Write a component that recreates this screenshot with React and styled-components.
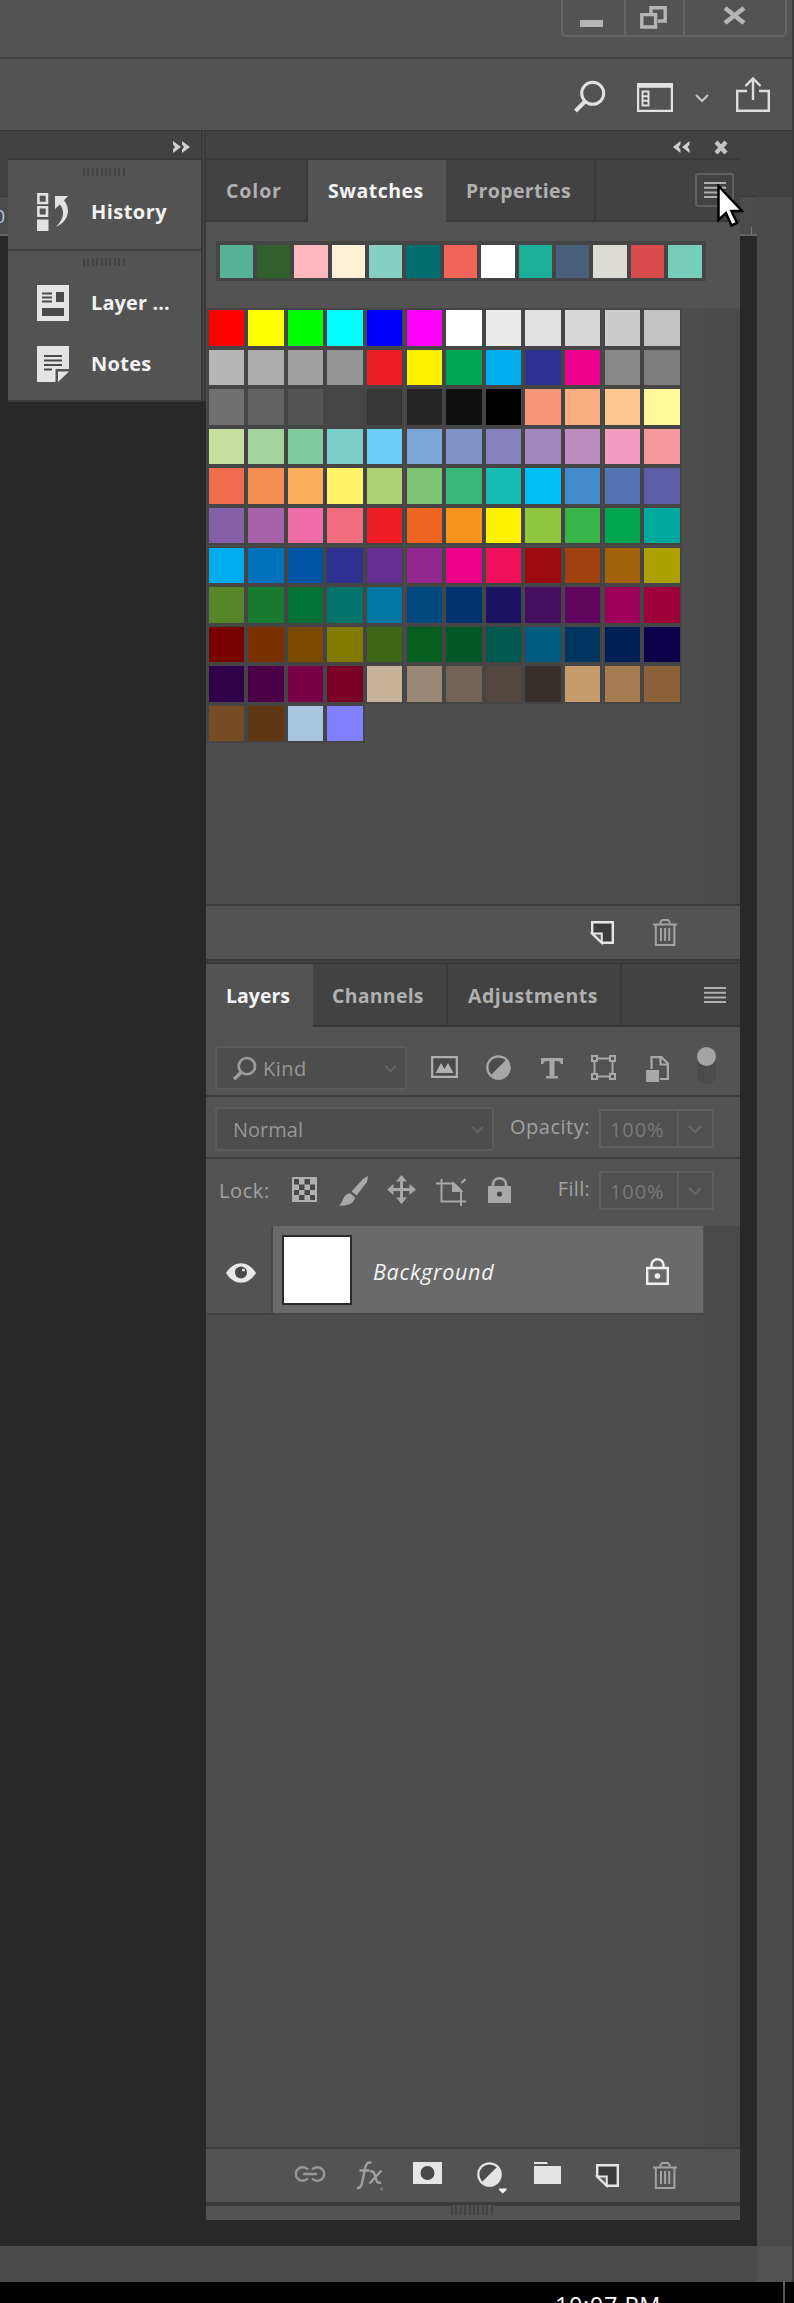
import React from "react";
import styled, { createGlobalStyle, css } from "styled-components";

const Global = createGlobalStyle`
  html, body { margin: 0; padding: 0; background: #282828; }
  body, #root { width: 794px; height: 2303px; overflow: hidden; }
  * { box-sizing: border-box; }
  body { font-family: "Open Sans", "Noto Sans", sans-serif; font-size: 20px; color: #b4b4b4; }
  svg { display: block; flex: none; }
`;

const Screen = styled.div`
  position: relative;
  width: 794px;
  height: 2303px;
  display: flex;
  flex-direction: column;
  overflow: hidden;
`;

const AppWindow = styled.div`
  display: flex;
  flex-direction: column;
  height: 2282px;
  border-right: 2px solid #3b3b3b;
  background: #535353;
`;

const TitleBar = styled.header`
  height: 59px;
  padding-right: 5px;
  border-bottom: 2px solid #404040;
  display: flex;
  justify-content: flex-end;
`;

const WindowControls = styled.div`
  display: flex;
  height: 37px;
  border: 2px solid #646464;
  border-top: 0;
  border-radius: 0 0 5px 5px;
`;

const ControlButton = styled.div`
  width: ${(p) => p.$w}px;
  padding: ${(p) => p.$pad};
  & + & { border-left: 2px solid #646464; }
`;

const OptionsBar = styled.div`
  height: 71px;
  display: flex;
  align-items: flex-start;
`;

const Glyph = styled.svg`
  width: ${(p) => p.$w}px;
  height: ${(p) => p.$h}px;
  margin: ${(p) => p.$m || "0"};
  color: ${(p) => p.$c || "#b4b4b4"};
  overflow: visible;
`;

const Workspace = styled.div`
  flex: 1;
  display: flex;
  border-top: 1px solid #383838;
  background: #282828;
  min-height: 0;
`;

const EdgeStrip = styled.div`
  width: ${(p) => p.$w}px;
  height: 100%;
  flex: none;
  overflow: hidden;
`;
const EdgeTabs = styled.div`
  height: 66px;
  background: #424242;
  border-bottom: 1px solid #383838;
`;
const EdgeRuler = styled.div`
  height: 39px;
  background: #4b4b4b;
  border-bottom: 2px solid #666;
  display: flex;
  justify-content: flex-end;
  align-items: flex-end;
`;
const RulerTick = styled.div`
  width: 1px;
  height: 7px;
  margin-right: 5px;
  background: #777;
`;
const RulerNumber = styled.span`
  font-size: 18px;
  line-height: 35px;
  color: #b9cbe0;
  margin-right: 3px;
`;

const IconDock = styled.aside`
  width: 193px;
  flex: none;
`;
const DockHeader = styled.div`
  height: 29px;
  background: #424242;
  border-bottom: 2px solid #393939;
  display: flex;
`;
const DockGroup = styled.div`
  height: ${(p) => p.$h}px;
  display: flex;
  flex-direction: column;
  background: #535353;
  border-bottom: 2px solid #3d3d3d;
`;
const Grip = styled.div`
  width: 43px;
  height: ${(p) => p.$h || 8}px;
  flex: none;
  margin: ${(p) => p.$m};
  background: repeating-linear-gradient(90deg, #434343 0 2px, #535353 2px 4.4px);
`;
const DockItem = styled.div`
  display: flex;
  align-items: center;
  padding-left: 29px;
  margin-top: ${(p) => p.$mt}px;
  height: 40px;
`;
const DockLabel = styled.span`
  margin-left: 22px;
  padding-bottom: 1px;
  font-weight: 700;
  font-size: 20px;
  color: #f2f2f2;
  letter-spacing: ${(p) => p.$ls || 0}px;
`;

const DockSeam = styled.div`
  width: 5px;
  height: 270px;
  background: #4a4a4a;
  border-left: 2px solid #393939;
  border-right: 2px solid #393939;
  flex: none;
`;

const PanelDock = styled.main`
  width: 534px;
  height: 2089px;
  flex: none;
  display: flex;
  flex-direction: column;
  background: #535353;
`;

const TabRow = styled.div`
  height: ${(p) => p.$h}px;
  display: flex;
  background: #424242;
  flex: none;
`;
const Tab = styled.div`
  width: ${(p) => p.$w}px;
  padding-left: ${(p) => p.$pl}px;
  padding-top: ${(p) => p.$pt || 0}px;
  display: flex;
  align-items: center;
  font-weight: 700;
  font-size: 19.5px;
  letter-spacing: ${(p) => p.$ls || 0}px;
  white-space: nowrap;
  border-right: 2px solid #393939;
  border-bottom: 2px solid #393939;
  color: #b0b0b0;
  ${(p) => p.$active && css`
    color: #f4f4f4;
    background: #535353;
    border-color: #535353;
  `}
`;
const TabFill = styled.div`
  flex: 1;
  display: flex;
  align-items: flex-start;
  border-bottom: 2px solid #393939;
`;
const MenuButton = styled.div`
  width: 39px;
  height: 34px;
  margin: 13px 0 0 99px;
  padding: 7px 0 0 7px;
  border: 2px solid #606060;
  border-radius: 3px;
`;
const MenuSlot = styled.div`
  margin: 23px 0 0 82px;
`;

const RecentBar = styled.div`
  height: 86px;
  padding: 19px 0 0 10px;
  flex: none;
`;
const RecentStrip = styled.div`
  width: 490px;
  padding: 3.5px;
  display: flex;
  gap: 4px;
  background: #454545;
`;
const RecentSwatch = styled.div`
  width: 33.4px;
  height: 33.4px;
  flex: none;
  background: ${(p) => p.$c};
`;
const ScrollPane = styled.div`
  display: flex;
  height: ${(p) => p.$h}px;
  flex: none;
  background: #4d4d4d;
  border-bottom: 2px solid #3d3d3d;
`;
const ScrollTrack = styled.div`
  width: 36px;
  margin-left: auto;
  background: #4a4a4a;
`;
const SwatchGrid = styled.div`
  display: grid;
  grid-template-columns: repeat(12, 35.5px);
  grid-auto-rows: 35.5px;
  gap: 4.1px;
  padding: 2px 0 0 2.6px;
  align-content: start;
`;
const Swatch = styled.div`
  background: ${(p) => p.$c};
  box-shadow: 0 0 0 2px #454545;
`;
const PanelFooter = styled.div`
  height: 53px;
  flex: none;
  display: flex;
  align-items: flex-start;
`;
const PanelGap = styled.div`
  height: 5px;
  flex: none;
  background: #444;
  border-top: 2px solid #393939;
  border-bottom: 2px solid #393939;
`;

const ControlRow = styled.div`
  height: ${(p) => p.$h}px;
  flex: none;
  display: flex;
  align-items: flex-start;
  ${(p) => p.$line && css`border-bottom: 2px solid #3d3d3d;`}
`;
const Select = styled.div`
  width: ${(p) => p.$w}px;
  height: 44px;
  margin: ${(p) => p.$m};
  border: 2px solid #5c5c5c;
  background: #4d4d4d;
  border-radius: 3px;
  display: flex;
  align-items: center;
  color: #979797;
  font-size: 20px;
  flex: none;
`;
const SelectText = styled.span`
  margin-left: ${(p) => p.$ml}px;
  margin-right: auto;
  letter-spacing: ${(p) => p.$ls || 0}px;
`;
const FieldLabel = styled.span`
  font-size: 20px;
  line-height: 28px;
  color: #a2a2a2;
  margin: ${(p) => p.$m};
  letter-spacing: ${(p) => p.$ls || 0}px;
`;
const NumberField = styled.div`
  width: 115px;
  height: 39px;
  margin: ${(p) => p.$m};
  border: 2px solid #5f5f5f;
  background: #505050;
  display: flex;
  color: #7a7a7a;
  font-size: 20px;
  line-height: 37px;
  padding-left: 9px;
  letter-spacing: 0.9px;
`;
const FieldArrow = styled.div`
  width: 35px;
  margin-left: auto;
  border-left: 2px solid #5f5f5f;
  padding: 14px 0 0 9px;
`;
const ToggleTrack = styled.div`
  width: 19px;
  height: 37px;
  border-radius: 10px;
  margin: 20px 0 0 28px;
  background: #4b4b4b;
`;
const ToggleKnob = styled.div`
  width: 19px;
  height: 19px;
  border-radius: 50%;
  background: #a4a4a4;
`;

const LayerArea = styled.div`
  flex: 1;
  display: flex;
  background: #4d4d4d;
  border-bottom: 2px solid #3f3f3f;
`;
const LayerRow = styled.div`
  width: 498px;
  height: 89px;
  display: flex;
  align-items: flex-start;
  background: #535353;
  border-bottom: 2px solid #444;
`;
const LayerBody = styled.div`
  width: 432px;
  height: 87px;
  margin-left: 15px;
  border-left: 2px solid #474747;
  background: #6a6a6a;
  display: flex;
`;
const Thumbnail = styled.div`
  width: 70px;
  height: 70px;
  margin: 9px 0 0 9px;
  border: 2px solid #2c2c2c;
  background: #fff;
`;
const LayerName = styled.span`
  margin: 32px 0 0 21px;
  font-size: 21.5px;
  line-height: 28px;
  font-style: italic;
  color: #f4f4f4;
  letter-spacing: 0.7px;
`;
const ResizeStrip = styled.div`
  height: 18px;
  flex: none;
  border-top: 4px solid #3b3b3b;
`;

const ScrollbarV = styled.div`
  flex: 1;
  border-top: 66px solid #424242;
  background: #4a4a4a;
`;
const ScrollbarH = styled.div`
  height: 36px;
  flex: none;
  background: #4a4a4a;
  display: flex;
  justify-content: flex-end;
`;
const ScrollCorner = styled.div`
  width: 35px;
  background: #525252;
`;
const Taskbar = styled.footer`
  height: 21px;
  background: #000;
  display: flex;
  overflow: hidden;
`;
const Clock = styled.span`
  width: 228px;
  margin-left: 555px;
  padding-top: 9px;
  font-size: 23.5px;
  line-height: 28px;
  color: #fff;
  letter-spacing: 0.6px;
`;
const ShowDesktop = styled.div`
  width: 2px;
  background: #5c5c5c;
`;
const Pointer = styled.svg`
  position: absolute;
  left: 717px;
  top: 184px;
  width: 27px;
  height: 44px;
`;

/* ---- icons ---- */
const MenuIcon = () => (
  <Glyph $w={22} $h={16} viewBox="0 0 22 16" stroke="#b0b0b0" strokeWidth="2">
    <path d="M0 1H22M0 5.7H22M0 10.4H22M0 15H22" />
  </Glyph>
);
const Chevron = ({ w = 14, h = 8, m, c, sw = 2.2 }) => (
  <Glyph $w={w} $h={h} $m={m} $c={c} viewBox="0 0 14 8" fill="none" stroke="currentColor" strokeWidth={sw}>
    <path d="M1 1L7 7L13 1" />
  </Glyph>
);
const SearchIcon = ({ w, m, c, sw }) => (
  <Glyph $w={w} $h={w} $m={m} $c={c} viewBox="0 0 31 31" fill="none" stroke="currentColor" strokeWidth={sw}>
    <circle cx="18.7" cy="12.3" r="11" />
    <path d="M11 20.5L1.5 30" strokeWidth={sw * 1.35} />
  </Glyph>
);
const DoubleArrow = ({ left, m }) => (
  <Glyph $w={17} $h={12} $m={m} viewBox="0 0 17 12" fill="#cfcfcf">
    {left ? (
      <path d="M7.5 0V3.5L5.5 6L7.5 8.5V12L0 6ZM16.5 0V3.5L14.5 6L16.5 8.5V12L9 6Z" />
    ) : (
      <path d="M0 0L8 6L0 12V8.5L2 6L0 3.5ZM9 0L17 6L9 12V8.5L11 6L9 3.5Z" />
    )}
  </Glyph>
);
const CloseIcon = ({ w, h, m, sw, c }) => (
  <Glyph $w={w} $h={h} $m={m} $c={c} viewBox={`0 0 ${w} ${h}`} stroke="currentColor" strokeWidth={sw}>
    <path d={`M2 1L${w - 2} ${h - 1}M${w - 2} 1L2 ${h - 1}`} />
  </Glyph>
);
const NewIcon = ({ m }) => (
  <Glyph $w={23} $h={23} $m={m} viewBox="0 0 23 23" fill="#3c3c3c" stroke="#e6e6e6" strokeWidth="2.4">
    <path d="M1.2 1.2H21.8V21.8H11L1.2 12.5Z" />
    <path d="M1.2 12.5H10.8V21.8Z" fill="#606060" strokeWidth="2" />
  </Glyph>
);
const TrashIcon = ({ m }) => (
  <Glyph $w={24} $h={27} $m={m} viewBox="0 0 24 27" fill="none" stroke="#a2a2a2" strokeWidth="2">
    <path d="M0 5.5H24M7.5 5.5V3L9.3 1H15L16.6 3V5.5M2.8 5.5V26H21.4V5.5M8 9V22M12.1 9V22M16.2 9V22" />
  </Glyph>
);
const AdjustIcon = ({ m, c, caret }) => (
  <Glyph $w={25} $h={25} $m={m} $c={c} viewBox="0 0 25 25" fill="currentColor">
    <circle cx="12.5" cy="12.5" r="11.2" fill="#4c4c4c" stroke="currentColor" strokeWidth="2.2" />
    <path d="M20.8 4.2A11.7 11.7 0 1 1 4.2 20.8Z" />
    {caret && <path d="M22 26.5H29.5V28L25.8 31.5L22 28Z" fill="#f4f4f4" />}
  </Glyph>
);

const RECENT = ["#57b196", "#31602c", "#ffb9bf", "#fff1d8", "#86cfc2", "#006e6f", "#f0645a", "#ffffff", "#1cb09a", "#4a607a", "#dcdbd6", "#d94b4d", "#77ceb8"];
const SWATCHES = (
  "ff0000 ffff00 00ff00 00ffff 0000ff ff00ff ffffff ebebeb e1e1e1 d7d7d7 cccccc c2c2c2 " +
  "b7b7b7 acacac a0a0a0 959595 ed1c24 fff200 00a651 00aeef 2e3192 ec008c 898989 7d7d7d " +
  "707070 626262 555555 464646 363636 262626 111111 000000 f7977a fbad82 fdc68c fff799 " +
  "c6df9c a4d49d 81ca9d 7bcdc9 6ccff7 7ca6d8 8293ca 8781bd a286bd bc8cbf f49bc1 f5999d " +
  "f16c4d f68e54 fbaf5a fff467 acd372 7dc473 39b778 16bcb4 00bff3 438ccb 5573b7 5e5ca7 " +
  "855fa8 a763a9 ef6ea8 f16d7e ee1d24 f16522 f7941d fff100 8fc63d 37b44a 00a650 00a99e " +
  "00aeef 0072bc 0054a5 2f3192 652c91 91278f ed008c ee105a 9d0a0f a1410d a36209 aba000 " +
  "588528 197b30 007236 00736a 0076a4 004a80 003370 1d1363 450e61 62055f 9e005c 9d0039 " +
  "790000 7b3000 7c4900 827a00 3e6617 045f20 005824 005951 005b7e 003562 002056 0c004b " +
  "30004a 4b0048 7a0045 7a0026 c7b299 998675 736357 534741 37302d c69c6d a77c50 8c6239 " +
  "754c24 603813 a8c4df 8080ff"
).split(" ");

export default function App() {
  return (
    <Screen>
      <Global />
      <AppWindow>
        <TitleBar>
          <WindowControls>
            <ControlButton $w={61} $pad="20px 0 0 17px">
              <Glyph $w={23} $h={7} viewBox="0 0 23 7" fill="#b5b5b5"><path d="M0 0H23V7H0Z" /></Glyph>
            </ControlButton>
            <ControlButton $w={59} $pad="6px 0 0 14px">
              <Glyph $w={27} $h={23} viewBox="0 0 27 23" fill="none" stroke="#b5b5b5" strokeWidth="3.4">
                <path d="M11 8V1.8H25.2V15H18" /><path d="M1.8 8.6H15.6V21H1.8Z" />
              </Glyph>
            </ControlButton>
            <ControlButton $w={102} $pad="7px 0 0 38px">
              <CloseIcon w={23} h={17} sw={4.6} c="#b5b5b5" />
            </ControlButton>
          </WindowControls>
        </TitleBar>
        <OptionsBar>
          <SearchIcon w={31} m="22px 0 0 574px" c="#e2e2e2" sw={3} />
          <Glyph $w={36} $h={29} $m="24px 0 0 32px" viewBox="0 0 36 29" fill="none" stroke="#e2e2e2" strokeWidth="2.2">
            <path d="M1.1 1.1H34.9V27.9H1.1Z" /><path d="M0 2.4H36" strokeWidth="4.6" />
            <path d="M5.5 8.5H11.5V22.5H5.5ZM5.5 13.2H11.5M5.5 17.8H11.5" strokeWidth="1.9" />
          </Glyph>
          <Chevron m="35px 0 0 22px" c="#c4c4c4" />
          <Glyph $w={34} $h={35} $m="18px 0 0 27px" viewBox="0 0 34 35" fill="none" stroke="#dedede" strokeWidth="2.4">
            <path d="M11 14H1.2V33.8H32.8V14H23M17 23V2M9.5 9L17 1.5L24.5 9" />
          </Glyph>
        </OptionsBar>
        <Workspace>
          <EdgeStrip $w={8}>
            <EdgeTabs />
            <EdgeRuler><RulerNumber>0</RulerNumber></EdgeRuler>
          </EdgeStrip>
          <IconDock>
            <DockHeader><DoubleArrow m="10px 0 0 165px" /></DockHeader>
            <DockGroup $h={91}>
              <Grip $m="8px 0 0 75px" />
              <DockItem $mt={16}>
                <Glyph $w={32} $h={38} viewBox="0 0 32 38" fill="none" stroke="#e2e2e2" strokeWidth="2.6">
                  <path d="M1.4 1.4H10V10H1.4ZM1.4 14.2H10V22.8H1.4Z" />
                  <path d="M0 26.5H11.5V38H0Z" fill="#e2e2e2" stroke="none" />
                  <path d="M18 3H31L27 7.2C34 16 32 28 19 34C27 26 28 18 23 11.5L18 16Z" fill="#e2e2e2" stroke="none" />
                </Glyph>
                <DockLabel $ls={0.45}>History</DockLabel>
              </DockItem>
            </DockGroup>
            <DockGroup $h={151}>
              <Grip $m="7px 0 0 75px" />
              <DockItem $mt={17}>
                <Glyph $w={32} $h={36} viewBox="0 0 32 36">
                  <path d="M0 0H32V36H0Z" fill="#e4e4e4" />
                  <path d="M19 7H27V17H19ZM5 23H27V31H5Z" fill="#4a4a4a" />
                  <path d="M5 8.5H15M5 12.5H15M5 16.5H15" stroke="#4a4a4a" strokeWidth="2" />
                </Glyph>
                <DockLabel $ls={0.1}>Layer ...</DockLabel>
              </DockItem>
              <DockItem $mt={21}>
                <Glyph $w={32} $h={36} viewBox="0 0 32 36">
                  <path d="M0 0H32V23H18.5V36H0Z" fill="#e4e4e4" />
                  <path d="M21 25.5H32L21 36Z" fill="#e4e4e4" />
                  <path d="M7 10H25M7 14.5H25M7 19H25M7 23.5H15" stroke="#4a4a4a" strokeWidth="2" />
                </Glyph>
                <DockLabel $ls={0.3}>Notes</DockLabel>
              </DockItem>
            </DockGroup>
          </IconDock>
          <DockSeam />
          <PanelDock>
            <DockHeader>
              <DoubleArrow left m="10px 0 0 467px" />
              <CloseIcon w={14} h={13} sw={4.2} m="10px 0 0 24px" c="#c4c4c4" />
            </DockHeader>
            <TabRow $h={62}>
              <Tab $w={102} $pl={20} $ls={0.9}>Color</Tab>
              <Tab $w={138} $pl={20} $ls={0.5} $active>Swatches</Tab>
              <Tab $w={150} $pl={20} $ls={0.35}>Properties</Tab>
              <TabFill><MenuButton><MenuIcon /></MenuButton></TabFill>
            </TabRow>
            <RecentBar>
              <RecentStrip>{RECENT.map((c) => <RecentSwatch key={c} $c={c} />)}</RecentStrip>
            </RecentBar>
            <ScrollPane $h={598}>
              <SwatchGrid>{SWATCHES.map((c, i) => <Swatch key={i} $c={"#" + c} />)}</SwatchGrid>
              <ScrollTrack />
            </ScrollPane>
            <PanelFooter>
              <NewIcon m="15px 0 0 385px" />
              <TrashIcon m="13px 0 0 39px" />
            </PanelFooter>
            <PanelGap />
            <TabRow $h={63}>
              <Tab $w={107} $pl={20} $pt={1} $active>Layers</Tab>
              <Tab $w={135} $pl={19} $pt={1} $ls={0.25}>Channels</Tab>
              <Tab $w={174} $pl={20} $pt={1} $ls={0.5}>Adjustments</Tab>
              <TabFill><MenuSlot><MenuIcon /></MenuSlot></TabFill>
            </TabRow>
            <ControlRow $h={70} $line>
              <Select $w={192} $m="19px 0 0 9px">
                <SearchIcon w={23} m="0 0 0 16px" c="#9c9c9c" sw={3.6} />
                <SelectText $ml={7} $ls={0.5}>Kind</SelectText>
                <Chevron w={13} h={7} m="0 8px 0 0" c="#666" />
              </Select>
              <Glyph $w={27} $h={22} $m="29px 0 0 24px" viewBox="0 0 27 22" fill="#b0b0b0">
                <path d="M1.2 1.2H25.8V20.8H1.2Z" fill="#4a4a4a" stroke="#b0b0b0" strokeWidth="2.2" />
                <path d="M4.5 17L10 7L13.5 13L17 7L22.5 17Z" />
              </Glyph>
              <AdjustIcon m="28px 0 0 28px" c="#a8a8a8" />
              <Glyph $w={22} $h={21} $m="31px 0 0 30px" viewBox="0 0 22 21" fill="#a8a8a8">
                <path d="M0 0H22V6H19.8C19.4 4 18.5 3 16 3H13.5V18H17V20.5H5V18H8.5V3H6C3.5 3 2.6 4 2.2 6H0Z" />
              </Glyph>
              <Glyph $w={25} $h={25} $m="28px 0 0 28px" viewBox="0 0 25 25" fill="none" stroke="#a8a8a8" strokeWidth="2">
                <path d="M1 1H6V6H1ZM19 1H24V6H19ZM1 19H6V24H1ZM19 19H24V24H19ZM6 3.5H19M6 21.5H19M3.5 6V19M21.5 6V19" />
              </Glyph>
              <Glyph $w={23} $h={26} $m="29px 0 0 30px" viewBox="0 0 23 26" fill="none" stroke="#a8a8a8" strokeWidth="2.2">
                <path d="M5.5 13V1.1H15.5L21.9 7.5V23H14M14.5 1.5V8.5H21.5" />
                <path d="M0 14H13V26H0Z" fill="#a8a8a8" stroke="none" />
              </Glyph>
              <ToggleTrack><ToggleKnob /></ToggleTrack>
            </ControlRow>
            <ControlRow $h={62} $line>
              <Select $w={279} $m="10px 0 0 9px">
                <SelectText $ml={16}>Normal</SelectText>
                <Chevron w={13} h={7} m="0 8px 0 0" c="#666" />
              </Select>
              <FieldLabel $m="16px 0 0 16px" $ls={0.5}>Opacity:</FieldLabel>
              <NumberField $m="12px 26px 0 auto">
                <span>100%</span>
                <FieldArrow><Chevron c="#686868" /></FieldArrow>
              </NumberField>
            </ControlRow>
            <ControlRow $h={67}>
              <FieldLabel $m="18px 0 0 13px" $ls={0.6}>Lock:</FieldLabel>
              <Glyph $w={25} $h={25} $m="18px 0 0 22px" viewBox="0 0 25 25">
                <path d="M1 1H24V24H1Z" fill="#484848" stroke="#b0b0b0" strokeWidth="2" />
                <path d="M7 2H12.5V7.5H7ZM18 2H23V7.5H18ZM2 7.5H7V13H2ZM12.5 7.5H18V13H12.5ZM7 13H12.5V18H7ZM18 13H23V18H18ZM2 18H7V23H2ZM12.5 18H18V23H12.5Z" fill="#b0b0b0" />
              </Glyph>
              <Glyph $w={29} $h={30} $m="17px 0 0 22px" viewBox="0 0 29 30" fill="#a8a8a8">
                <path d="M29 0L28 6L17.5 19.5L12.5 15.5L24 3Z" /><path d="M11 17.2L16 21.3C15.5 28 8 30 0 29.5C4.5 27 3 18.5 11 17.2Z" />
              </Glyph>
              <Glyph $w={29} $h={29} $m="16px 0 0 19px" viewBox="0 0 29 29" fill="#a8a8a8">
                <path d="M14.5 0L20 6.5H16V13H22.5V9L29 14.5L22.5 20V16H16V22.5H20L14.5 29L9 22.5H13V16H6.5V20L0 14.5L6.5 9V13H13V6.5H9Z" />
              </Glyph>
              <Glyph $w={30} $h={27} $m="20px 0 0 20px" viewBox="0 0 30 27" fill="none" stroke="#a8a8a8" strokeWidth="2">
                <path d="M0 4.5H18L25 11.5V27M5.5 0V22.5H30M25.5 4L29.5 0" />
                <path d="M17 4.5L25 12H17Z" fill="#a8a8a8" />
              </Glyph>
              <Glyph $w={23} $h={26} $m="18px 0 0 22px" viewBox="0 0 23 26" fill="none" stroke="#a8a8a8" strokeWidth="2.6">
                <path d="M5 10V7A6.5 5.8 0 0 1 18 7V10" />
                <path d="M0 9H23V26H0Z" fill="#a8a8a8" stroke="none" />
                <circle cx="11.5" cy="17" r="2.6" fill="#484848" stroke="none" />
              </Glyph>
              <FieldLabel $m="16px 0 0 47px" $ls={0.3}>Fill:</FieldLabel>
              <NumberField $m="12px 26px 0 auto">
                <span>100%</span>
                <FieldArrow><Chevron c="#686868" /></FieldArrow>
              </NumberField>
            </ControlRow>
            <LayerArea>
              <LayerRow>
                <Glyph $w={30} $h={20} $m="37px 0 0 20px" viewBox="0 0 30 20">
                  <path d="M0 10C8 -3 22 -3 30 10C22 23 8 23 0 10Z" fill="#e8e8e8" />
                  <circle cx="15" cy="9.5" r="6" fill="#484848" /><circle cx="17.5" cy="7" r="1.5" fill="#ddd" />
                </Glyph>
                <LayerBody>
                  <Thumbnail />
                  <LayerName>Background</LayerName>
                  <Glyph $w={23} $h={27} $m="32px 34px 0 auto" viewBox="0 0 23 27" fill="none" stroke="#f0f0f0" strokeWidth="2.4">
                    <path d="M5.5 9V7A6 5.8 0 0 1 17.5 7V9M1.2 10H21.8V25.8H1.2Z" />
                    <circle cx="11.5" cy="18" r="2.8" fill="#f0f0f0" stroke="none" />
                  </Glyph>
                </LayerBody>
              </LayerRow>
              <ScrollTrack />
            </LayerArea>
            <PanelFooter>
              <Glyph $w={32} $h={16} $m="17px 0 0 88px" viewBox="0 0 32 16" fill="none" stroke="#989898" strokeWidth="2.4">
                <path d="M14 3.5A7 6.7 0 1 0 14 12.5M18 3.5A7 6.7 0 1 1 18 12.5M9 8H23" />
              </Glyph>
              <Glyph $w={28} $h={30} $m="12px 0 0 30px" viewBox="0 0 28 30" fill="none" stroke="#a0a0a0" strokeWidth="2.4">
                <path d="M15.5 2C11 0 9.5 4 8.7 9L6 22C5.3 25.5 4 27.5 1 27M3.5 9.5H13.5M14 10.5C18 9 19 14 20 18C20.7 21 22 22.5 25 21.5M25.5 9.5L13.5 22.5" />
                <path d="M23 28L27 26V30Z" fill="#777" stroke="none" />
              </Glyph>
              <Glyph $w={29} $h={22} $m="13px 0 0 29px" viewBox="0 0 29 22">
                <path d="M0 0H29V22H0Z" fill="#e6e6e6" /><circle cx="14.5" cy="11" r="7" fill="#484848" />
              </Glyph>
              <AdjustIcon m="13px 0 0 35px" c="#e4e4e4" caret />
              <Glyph $w={27} $h={22} $m="13px 0 0 32px" viewBox="0 0 27 22" fill="#e4e4e4">
                <path d="M0 0H13L14 2H0ZM0 4H27V22H0Z" />
              </Glyph>
              <NewIcon m="15px 0 0 35px" />
              <TrashIcon m="13px 0 0 34px" />
            </PanelFooter>
            <ResizeStrip><Grip $h={10} $m="-1px 0 0 245px" /></ResizeStrip>
          </PanelDock>
          <EdgeStrip $w={17}>
            <EdgeTabs />
            <EdgeRuler><RulerTick /></EdgeRuler>
          </EdgeStrip>
          <ScrollbarV />
        </Workspace>
        <ScrollbarH><ScrollCorner /></ScrollbarH>
      </AppWindow>
      <Taskbar>
        <Clock>10:07 PM</Clock>
        <ShowDesktop />
      </Taskbar>
      <Pointer viewBox="0 0 27 44" fill="#fff" stroke="#000" strokeWidth="2.5">
        <path d="M1.5 2V36L9 29L14.5 41.5L20 39L14.5 27H25Z" />
      </Pointer>
    </Screen>
  );
}
